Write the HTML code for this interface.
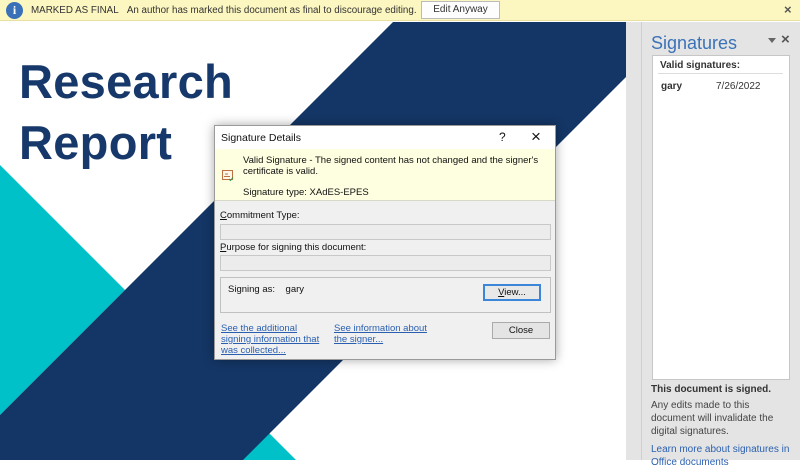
<!DOCTYPE html>
<html><head><meta charset="utf-8"><style>
*{margin:0;padding:0;box-sizing:border-box}
body{width:800px;height:460px;overflow:hidden;position:relative;background:#fff;font-family:"Liberation Sans",sans-serif;font-size:11px;color:#222}
.abs{position:absolute}
.dlg{left:214px;top:125px;width:342px;height:235px;background:#f0f0f0;border:1px solid #9a9a9a;box-shadow:0 0 10px rgba(0,0,0,.35)}
.lnk{color:#2a5fb0;text-decoration:underline;font-size:9.5px;line-height:11px}
.box{background:#ececec;border:1px solid #c8c8c8}
</style></head><body>
<svg class="abs" style="left:0;top:0" width="800" height="460">
<polygon points="0,165 125,290 0,415" fill="#00c0c8"/>
<polygon points="200,460 268,432 296,460" fill="#00c0c8"/>
<polygon points="393,22 626,22 626,77 243,460 0,460 0,415" fill="#143666"/>
</svg>
<div class="abs" style="left:19px;top:51px;font-size:47px;font-weight:bold;color:#16386a;line-height:61px;letter-spacing:0.3px">Research<br>Report</div>
<div class="abs" style="left:0;top:0;width:800px;height:21px;background:#fcf6c0;border-bottom:1px solid #e8e0a0"></div>
<div class="abs" style="left:6px;top:2px;width:17px;height:17px;border-radius:50%;background:#3a70b8;color:#fff;font-weight:bold;font-size:12px;text-align:center;line-height:17px;font-family:'Liberation Serif',serif">i</div>
<div class="abs" style="left:31px;top:5px;font-size:9.8px;color:#333;white-space:nowrap">MARKED AS FINAL&nbsp;&nbsp;&nbsp;An author has marked this document as final to discourage editing.</div>
<div class="abs" style="left:421px;top:1px;width:79px;height:18px;background:#fdfdfd;border:1px solid #bbb;text-align:center;font-size:10px;line-height:16px;color:#333">Edit Anyway</div>
<div class="abs" style="left:784px;top:2px;font-size:13px;font-weight:bold;color:#555">×</div>
<div class="abs" style="left:626px;top:22px;width:174px;height:438px;background:#e4e4e4"></div>
<div class="abs" style="left:641px;top:22px;width:1px;height:438px;background:#cfcfcf"></div>
<div class="abs" style="left:651px;top:33px;font-size:18px;color:#3b72b8">Signatures</div>
<div class="abs" style="left:768px;top:38px;width:0;height:0;border-left:4px solid transparent;border-right:4px solid transparent;border-top:5px solid #666"></div>
<div class="abs" style="left:781px;top:31px;font-size:15px;font-weight:bold;color:#555">×</div>
<div class="abs" style="left:652px;top:55px;width:138px;height:325px;background:#fff;border:1px solid #c6c6c6"></div>
<div class="abs" style="left:660px;top:60px;font-size:10px;font-weight:bold;color:#333">Valid signatures:</div>
<div class="abs" style="left:658px;top:73px;width:125px;height:1px;background:#ddd"></div>
<div class="abs" style="left:661px;top:81px;font-size:10px;font-weight:bold;color:#333">gary</div>
<div class="abs" style="left:716px;top:81px;font-size:10px;color:#333">7/26/2022</div>
<div class="abs" style="left:651px;top:384px;font-size:10px;font-weight:bold;color:#333">This document is signed.</div>
<div class="abs" style="left:651px;top:399px;font-size:10px;color:#444;line-height:13px;width:140px">Any edits made to this document will invalidate the digital signatures.</div>
<div class="abs" style="left:651px;top:443px;font-size:10px;color:#2a5fb0;line-height:13px;width:149px;white-space:nowrap">Learn more about signatures in<br>Office documents</div>
<div class="abs dlg">
 <div class="abs" style="left:0;top:0;width:340px;height:23px;background:#fff"></div>
 <div class="abs" style="left:6px;top:6px;font-size:10.5px;color:#111">Signature Details</div>
 <div class="abs" style="left:284px;top:4px;font-size:12px;color:#111">?</div>
 <div class="abs" style="left:316px;top:1px;font-size:17px;color:#111">×</div>
 <div class="abs" style="left:0;top:23px;width:340px;height:52px;background:#fefee0;border-bottom:1px solid #d8d8c8"></div>
 <svg class="abs" style="left:7px;top:44px" width="12" height="12"><rect x="0.5" y="0.5" width="10" height="9" fill="#fff7e8" stroke="#c07040"/><line x1="3" y1="4" x2="6" y2="4" stroke="#c07040"/><line x1="2" y1="6.5" x2="8" y2="6.5" stroke="#c07040"/><path d="M7 9 L8.5 10.5 L11 7.5" stroke="#2a9a4a" fill="none"/></svg>
 <div class="abs" style="left:28px;top:30px;font-size:9.5px;line-height:10.5px;color:#111;width:310px">Valid Signature - The signed content has not changed and the signer's certificate is valid.</div>
 <div class="abs" style="left:28px;top:61px;font-size:9.5px;color:#111">Signature type: XAdES-EPES</div>
 <div class="abs" style="left:5px;top:84px;font-size:9.5px;color:#111"><u>C</u>ommitment Type:</div>
 <div class="abs box" style="left:5px;top:98px;width:331px;height:16px"></div>
 <div class="abs" style="left:5px;top:116px;font-size:9.5px;color:#111"><u>P</u>urpose for signing this document:</div>
 <div class="abs box" style="left:5px;top:129px;width:331px;height:16px"></div>
 <div class="abs" style="left:5px;top:151px;width:331px;height:36px;border:1px solid #c0c0c0"></div>
 <div class="abs" style="left:13px;top:158px;font-size:9.5px;color:#111">Signing as:&nbsp;&nbsp;&nbsp;&nbsp;gary</div>
 <div class="abs" style="left:268px;top:158px;width:58px;height:17px;border:2px solid #3b86d8;background:#e8e8e8;text-align:center;font-size:9.5px;line-height:13px;color:#111"><u>V</u>iew...</div>
 <div class="abs lnk" style="left:6px;top:197px">See the additional<br>signing information that<br>was collected...</div>
 <div class="abs lnk" style="left:119px;top:197px">See information about<br>the signer...</div>
 <div class="abs" style="left:277px;top:196px;width:58px;height:17px;border:1px solid #aaa;background:#e4e4e4;text-align:center;font-size:9.5px;line-height:15px;color:#111">Close</div>
</div>
</body></html>
